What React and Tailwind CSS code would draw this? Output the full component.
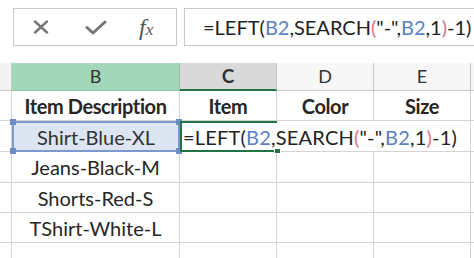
import React from "react";

const font = { fontFamily: "Lato, 'Open Sans', sans-serif" };

const FormulaText = () => (
  <>
    =LEFT(<span className="text-[#5b7fc4]">B2</span>,SEARCH
    <span className="text-[#d9738a]">(</span>"-",
    <span className="text-[#5b7fc4]">B2</span>,1
    <span className="text-[#d9738a]">)</span>-1)
  </>
);

const Cell = ({ children, className = "" }) => (
  <div className={`flex items-center justify-center border-r border-b border-[#d4d4d4] text-[20px] text-[#262626] ${className}`}>
    {children}
  </div>
);

const Head = ({ children }) => (
  <Cell className="h-[30px] text-[18px] font-bold tracking-[-0.4px] text-[#111]">{children}</Cell>
);

const rows = [
  ["Jeans-Black-M", "h-[31px]"],
  ["Shorts-Red-S", "h-[30px]"],
  ["TShirt-White-L", "h-[30px]"],
  ["", "h-[20px]"],
];

export default function App() {
  return (
    <div className="w-[474px] h-[258px] overflow-hidden bg-white" style={font}>
      {/* formula bar */}
      <div className="flex h-[63px] pt-2 gap-[7px] pl-[13px]">
        <div className="flex h-[38px] w-[164px] items-center border border-[#c9c9c9] text-[#767676]">
          <svg className="ml-[19px]" width="16" height="14" viewBox="0 0 16 14">
            <path d="M2 1.5 L14 12.5 M14 1.5 L2 12.5" stroke="currentColor" strokeWidth="2.4" strokeLinecap="round" />
          </svg>
          <svg className="ml-[36px]" width="22" height="15" viewBox="0 0 22 15">
            <path d="M2 7.5 L8 13 L20 2" fill="none" stroke="currentColor" strokeWidth="3" strokeLinecap="round" strokeLinejoin="round" />
          </svg>
          <span className="ml-[32px] italic text-[#555]" style={{ fontFamily: "'Liberation Serif', serif" }}>
            <span className="text-[24px]">f</span>
            <span className="text-[17px]">x</span>
          </span>
        </div>
        <div className="flex h-[38px] flex-1 items-center border border-r-0 border-[#c9c9c9] pl-[18px] text-[20px] text-[#222] whitespace-nowrap">
          <FormulaText />
        </div>
      </div>

      {/* sheet */}
      <div className="grid grid-cols-[12px_168px_97px_97px_97px_1fr]">
        {/* column headers */}
        <div className="h-[28px] border-r border-b border-[#c8c8c8] bg-[#f3f3f3]" />
        <div className="flex h-[28px] items-center justify-center border-r border-b border-[#8fc2a5] bg-[#a4d6ba] text-[18px] text-[#333]">B</div>
        <div className="flex h-[28px] items-center justify-center border-r border-b-2 border-r-[#c8c8c8] border-b-[#217346] bg-[#d9d9d9] text-[19px] font-bold text-[#333]">C</div>
        <div className="flex h-[28px] items-center justify-center border-r border-b border-[#c8c8c8] bg-[#f7f7f7] text-[18px] text-[#333]">D</div>
        <div className="flex h-[28px] items-center justify-center border-r border-b border-[#c8c8c8] bg-[#f7f7f7] text-[18px] text-[#333]">E</div>
        <div className="h-[28px] border-b border-[#c8c8c8] bg-[#f7f7f7]" />

        {/* row 1 */}
        <Cell className="h-[30px]" />
        <Head>Item Description</Head>
        <Head>Item</Head>
        <Head>Color</Head>
        <Head>Size</Head>
        <Cell className="h-[30px] border-r-0" />

        {/* row 2 */}
        <Cell className="h-[31px]" />
        <div className="relative flex h-[31px] items-center justify-center border-2 border-[#7d99cb] bg-[#dde5f3] text-[20px] text-[#333]">
          Shirt-Blue-XL
          <span className="absolute -left-[4px] -top-[4px] h-[6px] w-[6px] bg-[#6c8cc6]" />
          <span className="absolute -right-[4px] -top-[4px] h-[6px] w-[6px] bg-[#6c8cc6]" />
          <span className="absolute -left-[4px] -bottom-[4px] h-[6px] w-[6px] bg-[#6c8cc6]" />
          <span className="absolute -right-[4px] -bottom-[4px] h-[6px] w-[6px] bg-[#6c8cc6]" />
        </div>
        <div className="relative z-10 flex h-[31px] items-center border-y-2 border-l-2 border-[#217346] pl-[1px] text-[20px] tracking-[0.2px] text-[#222] whitespace-nowrap">
          <FormulaText />
          <span className="ml-[2px] inline-block h-[20px] w-[1.5px] bg-[#111]" />
          <span className="absolute -right-[4px] -bottom-[4px] h-[6px] w-[7px] border border-white bg-[#217346]" />
        </div>
        <div className="h-[31px] border-b border-[#d4d4d4]" />
        <div className="h-[31px] border-b border-r border-[#d4d4d4]" />
        <div className="h-[31px] border-b border-[#d4d4d4]" />

        {rows.map(([text, h], i) => (
          <React.Fragment key={i}>
            <Cell className={h} />
            <Cell className={h}>{text}</Cell>
            <Cell className={h} />
            <Cell className={h} />
            <Cell className={h} />
            <Cell className={`${h} border-r-0`} />
          </React.Fragment>
        ))}
      </div>
    </div>
  );
}
